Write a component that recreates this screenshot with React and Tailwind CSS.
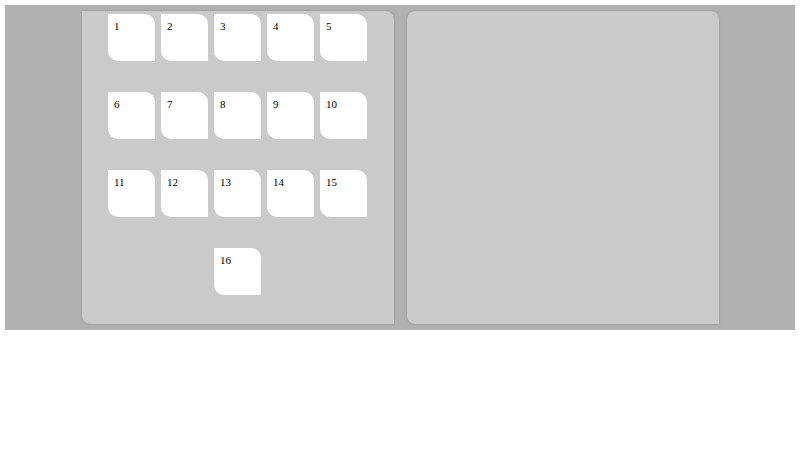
import React from "react";

const nums = Array.from({ length: 16 }, (_, i) => i + 1);

export default function App() {
  return (
    <div className="w-[800px] h-[450px] bg-white p-[5px]" style={{ fontFamily: '"Liberation Serif", serif' }}>
      <div className="w-[790px] h-[325px] bg-[#b0b0b0] flex justify-center gap-[13px] pt-[6px]">
        <div className="w-[312px] h-[313px] bg-[#cacaca] rounded-tr-[8px] rounded-bl-[8px] shadow-[0_0_2px_rgba(0,0,0,0.25)] pt-[3px]">
          <div className="flex flex-wrap justify-center gap-x-[6px] gap-y-[31px] px-[26px]">
            {nums.map((n) => (
              <div
                key={n}
                className="w-[47px] h-[47px] bg-white rounded-tr-[10px] rounded-bl-[10px] pl-[6px] pt-[5px] text-[11px] text-black leading-[14px]"
              >
                {n}
              </div>
            ))}
          </div>
        </div>
        <div className="w-[312px] h-[313px] bg-[#cacaca] rounded-tl-[8px] rounded-tr-[8px] rounded-bl-[8px] shadow-[0_0_2px_rgba(0,0,0,0.25)]"></div>
      </div>
    </div>
  );
}
